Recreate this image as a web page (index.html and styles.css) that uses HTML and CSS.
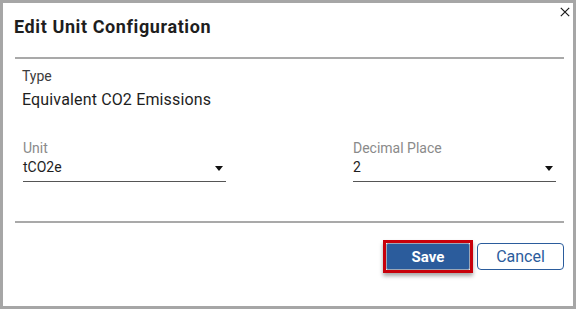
FILE: index.html
```html
<!DOCTYPE html>
<html>
<head>
<meta charset="utf-8">
<link rel="stylesheet" href="styles.css">
</head>
<body>
<div class="dialog">
  <div class="close" aria-label="Close">
    <svg width="10" height="10" viewBox="0 0 10 10"><path d="M0.8 0.8 L9.2 9.2 M9.2 0.8 L0.8 9.2" stroke="#1a1a1a" stroke-width="1.2" fill="none"/></svg>
  </div>
  <div class="header">Edit Unit Configuration</div>
  <div class="rule"></div>
  <div class="content">
    <div class="type-label">Type</div>
    <div class="type-value">Equivalent CO2 Emissions</div>
    <div class="fields">
      <div class="field field-unit">
        <div class="field-label">Unit</div>
        <div class="select">
          <span class="select-value">tCO2e</span>
          <span class="caret"></span>
        </div>
      </div>
      <div class="field field-decimal">
        <div class="field-label">Decimal Place</div>
        <div class="select">
          <span class="select-value">2</span>
          <span class="caret"></span>
        </div>
      </div>
    </div>
  </div>
  <div class="rule"></div>
  <div class="footer">
    <div class="highlight"><button class="btn-save">Save</button></div>
    <button class="btn-cancel">Cancel</button>
  </div>
</div>
</body>
</html>
```
FILE: styles.css
```css
html, body {
  margin: 0;
  padding: 0;
  background: #ffffff;
}
body {
  font-family: Roboto, "Liberation Sans", Arial, sans-serif;
}
.dialog {
  position: relative;
  width: 576px;
  height: 309px;
  box-sizing: border-box;
  border: 3px solid #a6a6a6;
  background: #ffffff;
}
.close {
  position: absolute;
  top: 4px;
  right: 3px;
  width: 10px;
  height: 10px;
  line-height: 0;
}
.header {
  padding: 14px 0 20px 11px;
  font-size: 18px;
  font-weight: 700;
  letter-spacing: 0.6px;
  color: #1e1e1e;
  line-height: 20px;
  height: 20px;
}
.rule {
  height: 2px;
  background: #a9a9a9;
  margin: 0 9px 0 12px;
}
.content {
  padding: 9px 0 0 19px;
  height: 162px;
  box-sizing: border-box;
}
.type-label {
  font-size: 14px;
  color: #3c3c3c;
  line-height: 16px;
}
.type-value {
  margin-top: 7px;
  font-size: 16px;
  letter-spacing: 0.15px;
  color: #1e1e1e;
  line-height: 18px;
}
.fields {
  display: flex;
  margin-top: 31px;
}
.field-unit {
  width: 203px;
  margin-left: 1px;
}
.field-decimal {
  width: 203px;
  margin-left: 127px;
}
.field-label {
  font-size: 14px;
  color: #8a8a8a;
  line-height: 16px;
}
.select {
  display: flex;
  align-items: center;
  justify-content: space-between;
  height: 22px;
  padding-bottom: 3px;
  border-bottom: 1px solid #555555;
}
.select-value {
  font-size: 14px;
  color: #1e1e1e;
  line-height: 17px;
}
.caret {
  width: 0;
  height: 0;
  border-left: 4px solid transparent;
  border-right: 4px solid transparent;
  border-top: 5px solid #111111;
  margin-right: 3px;
  margin-top: 3px;
}
.footer {
  display: flex;
  align-items: center;
  justify-content: flex-end;
  padding: 17px 9px 0 0;
}
.highlight {
  border: 3px solid #c8000a;
  box-shadow: 0 3px 4px rgba(0, 0, 0, 0.35);
  line-height: 0;
}
.btn-save {
  width: 84px;
  height: 27px;
  margin: 0;
  background: #2b5c9c;
  border: 1px solid #9aa7b8;
  border-radius: 2px;
  color: #ffffff;
  font-family: Roboto, "Liberation Sans", Arial, sans-serif;
  font-size: 15px;
  font-weight: 700;
  padding: 0;
}
.btn-cancel {
  margin-left: 4px;
  width: 87px;
  height: 27px;
  background: #ffffff;
  border: 1px solid #2b5c9c;
  border-radius: 4px;
  color: #2b5c9c;
  font-family: Roboto, "Liberation Sans", Arial, sans-serif;
  font-size: 16px;
  padding: 0;
}
```
